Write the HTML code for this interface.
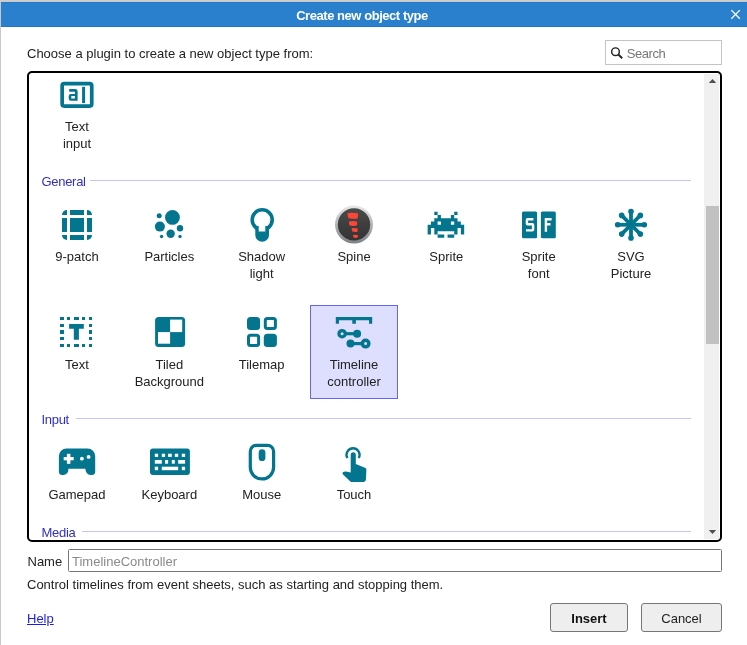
<!DOCTYPE html>
<html><head><meta charset="utf-8"><style>
html,body{margin:0;padding:0}
body{width:747px;height:645px;position:relative;overflow:hidden;background:#fff;font-family:"Liberation Sans", sans-serif}
</style></head><body><div style="position:absolute;left:0;top:0;width:747px;height:645px;will-change:transform">
<div style="position:absolute;left:0;top:0;width:747px;height:2px;background:#cccccc"></div>
<div style="position:absolute;left:0;top:2px;width:1px;height:643px;background:#c8c8c8"></div>
<div style="position:absolute;left:1px;top:2px;width:746px;height:25px;background:#2a80cc;border-top:1px solid #2279c8;border-bottom:1px solid #1f77c9;box-sizing:border-box"></div>
<div style="position:absolute;left:212.00px;top:7.50px;width:300px;text-align:center;line-height:16px;font-size:13px;color:#fff;font-weight:700;white-space:nowrap;letter-spacing:-0.45px;">Create new object type</div>
<svg style="position:absolute;left:0;top:0" width="747" height="645"><path d="M731.3 10.1 L739.8 18.7 M739.8 10.1 L731.3 18.7" stroke="#fff" stroke-width="1.35" fill="none"/></svg>
<div style="position:absolute;left:27.00px;top:45.50px;line-height:16px;font-size:13px;color:#222;font-weight:400;white-space:nowrap;">Choose a plugin to create a new object type from:</div>
<div style="position:absolute;left:605px;top:40px;width:117px;height:25px;border:1px solid #c4c4c4;box-sizing:border-box;background:#fff"></div>
<svg style="position:absolute;left:0;top:0" width="747" height="645"><circle cx="615.5" cy="51.7" r="3.85" stroke="#222" stroke-width="1.45" fill="none"/><path d="M618.3 54.5 L622.2 58.2" stroke="#222" stroke-width="1.9" fill="none"/></svg>
<div style="position:absolute;left:626.80px;top:45.50px;line-height:16px;font-size:13px;color:#777;font-weight:400;white-space:nowrap;letter-spacing:-0.45px;">Search</div>
<div style="position:absolute;left:27px;top:71px;width:695px;height:470.5px;border:2px solid #000;border-radius:5px;box-sizing:border-box;overflow:hidden;background:#fff"></div>
<div style="position:absolute;left:704px;top:74px;width:15px;height:465px;background:#f0f0f0"></div>
<div style="position:absolute;left:706px;top:206px;width:13px;height:138px;background:#c1c1c1"></div>
<svg style="position:absolute;left:0;top:0" width="747" height="645"><path d="M708.8 82.9 L716.2 82.9 L712.5 78.9 Z" fill="#505050"/><path d="M708.8 529.9 L716.2 529.9 L712.5 533.9 Z" fill="#505050"/></svg>
<div style="position:absolute;left:310px;top:305px;width:88px;height:93.5px;background:#dedeff;border:1px solid #6464ff;box-sizing:border-box"></div>
<div style="position:absolute;left:41.50px;top:173.50px;line-height:16px;font-size:13px;color:#3030c8;font-weight:400;white-space:nowrap;letter-spacing:-0.3px;">General</div>
<div style="position:absolute;left:90px;top:180px;width:601px;height:1px;background:#c4c4fb"></div>
<div style="position:absolute;left:41.50px;top:411.60px;line-height:16px;font-size:13px;color:#3030c8;font-weight:400;white-space:nowrap;letter-spacing:-0.3px;">Input</div>
<div style="position:absolute;left:76px;top:418px;width:615px;height:1px;background:#c4c4fb"></div>
<div style="position:absolute;left:41.50px;top:524.50px;line-height:16px;font-size:13px;color:#3030c8;font-weight:400;white-space:nowrap;letter-spacing:-0.3px;">Media</div>
<div style="position:absolute;left:82px;top:530.5px;width:609px;height:1px;background:#c4c4fb"></div>
<div style="position:absolute;left:32.00px;top:118.50px;width:90px;text-align:center;line-height:16px;font-size:13px;color:#222;font-weight:400;white-space:nowrap;">Text</div>
<div style="position:absolute;left:32.00px;top:135.50px;width:90px;text-align:center;line-height:16px;font-size:13px;color:#222;font-weight:400;white-space:nowrap;">input</div>
<div style="position:absolute;left:32.00px;top:248.50px;width:90px;text-align:center;line-height:16px;font-size:13px;color:#222;font-weight:400;white-space:nowrap;">9-patch</div>
<div style="position:absolute;left:124.33px;top:248.50px;width:90px;text-align:center;line-height:16px;font-size:13px;color:#222;font-weight:400;white-space:nowrap;">Particles</div>
<div style="position:absolute;left:216.67px;top:248.50px;width:90px;text-align:center;line-height:16px;font-size:13px;color:#222;font-weight:400;white-space:nowrap;">Shadow</div>
<div style="position:absolute;left:216.67px;top:265.50px;width:90px;text-align:center;line-height:16px;font-size:13px;color:#222;font-weight:400;white-space:nowrap;">light</div>
<div style="position:absolute;left:309.00px;top:248.50px;width:90px;text-align:center;line-height:16px;font-size:13px;color:#222;font-weight:400;white-space:nowrap;">Spine</div>
<div style="position:absolute;left:401.33px;top:248.50px;width:90px;text-align:center;line-height:16px;font-size:13px;color:#222;font-weight:400;white-space:nowrap;">Sprite</div>
<div style="position:absolute;left:493.67px;top:248.50px;width:90px;text-align:center;line-height:16px;font-size:13px;color:#222;font-weight:400;white-space:nowrap;">Sprite</div>
<div style="position:absolute;left:493.67px;top:265.50px;width:90px;text-align:center;line-height:16px;font-size:13px;color:#222;font-weight:400;white-space:nowrap;">font</div>
<div style="position:absolute;left:586.00px;top:248.50px;width:90px;text-align:center;line-height:16px;font-size:13px;color:#222;font-weight:400;white-space:nowrap;">SVG</div>
<div style="position:absolute;left:586.00px;top:265.50px;width:90px;text-align:center;line-height:16px;font-size:13px;color:#222;font-weight:400;white-space:nowrap;">Picture</div>
<div style="position:absolute;left:32.00px;top:356.50px;width:90px;text-align:center;line-height:16px;font-size:13px;color:#222;font-weight:400;white-space:nowrap;">Text</div>
<div style="position:absolute;left:124.33px;top:356.50px;width:90px;text-align:center;line-height:16px;font-size:13px;color:#222;font-weight:400;white-space:nowrap;">Tiled</div>
<div style="position:absolute;left:124.33px;top:373.50px;width:90px;text-align:center;line-height:16px;font-size:13px;color:#222;font-weight:400;white-space:nowrap;">Background</div>
<div style="position:absolute;left:216.67px;top:356.50px;width:90px;text-align:center;line-height:16px;font-size:13px;color:#222;font-weight:400;white-space:nowrap;">Tilemap</div>
<div style="position:absolute;left:309.00px;top:356.50px;width:90px;text-align:center;line-height:16px;font-size:13px;color:#222;font-weight:400;white-space:nowrap;">Timeline</div>
<div style="position:absolute;left:309.00px;top:373.50px;width:90px;text-align:center;line-height:16px;font-size:13px;color:#222;font-weight:400;white-space:nowrap;">controller</div>
<div style="position:absolute;left:32.00px;top:486.50px;width:90px;text-align:center;line-height:16px;font-size:13px;color:#222;font-weight:400;white-space:nowrap;">Gamepad</div>
<div style="position:absolute;left:124.33px;top:486.50px;width:90px;text-align:center;line-height:16px;font-size:13px;color:#222;font-weight:400;white-space:nowrap;">Keyboard</div>
<div style="position:absolute;left:216.67px;top:486.50px;width:90px;text-align:center;line-height:16px;font-size:13px;color:#222;font-weight:400;white-space:nowrap;">Mouse</div>
<div style="position:absolute;left:309.00px;top:486.50px;width:90px;text-align:center;line-height:16px;font-size:13px;color:#222;font-weight:400;white-space:nowrap;">Touch</div>
<svg style="position:absolute;left:0;top:0" width="747" height="645" viewBox="0 0 747 645"><rect x="62.15" y="83.55" width="29.6" height="22.5" rx="2" fill="none" stroke="#03758f" stroke-width="3.7"/><path fill-rule="evenodd" d="M69.2 89 H75.3 Q77.6 89 77.6 91.3 V100.7 H70.9 Q68.7 100.7 68.7 98.5 V96.2 Q68.7 94 70.9 94 H74.9 V91.8 H69.2 Z M71.3 95.9 H74.9 V98.4 H71.3 Z" fill="#03758f"/><rect x="82.1" y="86.8" width="3" height="16.3" fill="#03758f"/><clipPath id="r9"><rect x="62" y="210" width="30" height="30" rx="5"/></clipPath><g clip-path="url(#r9)" fill="#03758f"><rect x="62" y="210" width="5" height="5"/><rect x="62" y="218" width="5" height="14"/><rect x="62" y="235" width="5" height="5"/><rect x="70" y="210" width="14" height="5"/><rect x="70" y="218" width="14" height="14"/><rect x="70" y="235" width="14" height="5"/><rect x="87" y="210" width="5" height="5"/><rect x="87" y="218" width="5" height="14"/><rect x="87" y="235" width="5" height="5"/></g><circle cx="159.2" cy="215.7" r="2.5" fill="#03758f"/><circle cx="172.45" cy="217.4" r="7.4" fill="#03758f"/><circle cx="159.9" cy="226.6" r="5" fill="#03758f"/><circle cx="180" cy="228.3" r="3.2" fill="#03758f"/><circle cx="170.65" cy="233.8" r="4.2" fill="#03758f"/><circle cx="161.6" cy="236.5" r="1.7" fill="#03758f"/><circle cx="180" cy="236.5" r="1.7" fill="#03758f"/><circle cx="262.2" cy="219.8" r="10" fill="none" stroke="#03758f" stroke-width="3.6"/><path d="M255.3 226 H269 V235 A6.85 6.85 0 0 1 255.3 235 Z" fill="#03758f"/><rect x="258.7" y="224" width="6.6" height="7.5" fill="#fff"/><defs><linearGradient id="sg" x1="0" y1="0" x2="0" y2="1"><stop offset="0" stop-color="#e8e8e8"/><stop offset="1" stop-color="#7d8186"/></linearGradient><linearGradient id="sd" x1="0" y1="0" x2="0" y2="1"><stop offset="0" stop-color="#4a4a4a"/><stop offset="1" stop-color="#333"/></linearGradient></defs><circle cx="354" cy="224.6" r="19" fill="url(#sg)"/><circle cx="354" cy="224.4" r="16.2" fill="url(#sd)"/><path d="M347.6 213.1 Q352.9 212.39999999999998 357.9 213.2 Q358.4 215.8 357.59999999999997 218.4 Q352.9 219.20000000000002 348.40000000000003 218.3 Q347.5 215.8 347.6 213.1 Z" fill="#ff4536"/><path d="M348.9 221.4 Q353.1 220.7 357.0 221.5 Q357.5 223.5 356.7 225.5 Q353.1 226.3 349.7 225.4 Q348.79999999999995 223.5 348.9 221.4 Z" fill="#ff4536"/><path d="M351.7 228.3 Q354.79999999999995 227.6 357.59999999999997 228.4 Q358.09999999999997 230.05 357.29999999999995 231.7 Q354.79999999999995 232.5 352.5 231.6 Q351.59999999999997 230.05 351.7 228.3 Z" fill="#ff4536"/><path d="M352.9 235.1 Q355.54999999999995 234.39999999999998 357.9 235.2 Q358.4 236.39999999999998 357.59999999999997 237.6 Q355.54999999999995 238.4 353.7 237.5 Q352.79999999999995 236.39999999999998 352.9 235.1 Z" fill="#ff4536"/><path d="M434.28 211.65h3.32v3.26h-3.32zM454.21 211.65h3.32v3.26h-3.32zM437.60 214.91h3.32v3.26h-3.32zM450.89 214.91h3.32v3.26h-3.32zM434.28 218.18h3.32v3.26h-3.32zM437.60 218.18h3.32v3.26h-3.32zM440.92 218.18h3.32v3.26h-3.32zM444.24 218.18h3.32v3.26h-3.32zM447.57 218.18h3.32v3.26h-3.32zM450.89 218.18h3.32v3.26h-3.32zM454.21 218.18h3.32v3.26h-3.32zM430.95 221.44h3.32v3.26h-3.32zM434.28 221.44h3.32v3.26h-3.32zM440.92 221.44h3.32v3.26h-3.32zM444.24 221.44h3.32v3.26h-3.32zM447.57 221.44h3.32v3.26h-3.32zM454.21 221.44h3.32v3.26h-3.32zM457.53 221.44h3.32v3.26h-3.32zM427.63 224.70h3.32v3.26h-3.32zM430.95 224.70h3.32v3.26h-3.32zM434.28 224.70h3.32v3.26h-3.32zM437.60 224.70h3.32v3.26h-3.32zM440.92 224.70h3.32v3.26h-3.32zM444.24 224.70h3.32v3.26h-3.32zM447.57 224.70h3.32v3.26h-3.32zM450.89 224.70h3.32v3.26h-3.32zM454.21 224.70h3.32v3.26h-3.32zM457.53 224.70h3.32v3.26h-3.32zM460.86 224.70h3.32v3.26h-3.32zM427.63 227.96h3.32v3.26h-3.32zM434.28 227.96h3.32v3.26h-3.32zM437.60 227.96h3.32v3.26h-3.32zM440.92 227.96h3.32v3.26h-3.32zM444.24 227.96h3.32v3.26h-3.32zM447.57 227.96h3.32v3.26h-3.32zM450.89 227.96h3.32v3.26h-3.32zM454.21 227.96h3.32v3.26h-3.32zM460.86 227.96h3.32v3.26h-3.32zM427.63 231.22h3.32v3.26h-3.32zM434.28 231.22h3.32v3.26h-3.32zM454.21 231.22h3.32v3.26h-3.32zM460.86 231.22h3.32v3.26h-3.32zM437.60 234.49h3.32v3.26h-3.32zM440.92 234.49h3.32v3.26h-3.32zM447.57 234.49h3.32v3.26h-3.32zM450.89 234.49h3.32v3.26h-3.32z" fill="#03758f"/><rect x="522" y="211.6" width="15.1" height="26.6" rx="1.5" fill="#03758f"/><rect x="540.9" y="211.6" width="14.9" height="26.6" rx="1.5" fill="#03758f"/><path d="M533.4 219.2 H527.6 Q526.9 219.2 526.9 219.9 V223.6 Q526.9 224.3 527.6 224.3 H532.3 Q533.1 224.3 533.1 225 V229.6 Q533.1 230.4 532.3 230.4 H526" fill="none" stroke="#fff" stroke-width="2.4"/><path d="M551.6 219.2 H545.9 V231.7 M545.9 224.3 H550.5" fill="none" stroke="#fff" stroke-width="2.4"/><line x1="631.0" y1="224.75" x2="644.30" y2="224.75" stroke="#03758f" stroke-width="3.8"/><circle cx="644.30" cy="224.75" r="2.8" fill="#03758f"/><line x1="631.0" y1="224.75" x2="640.33" y2="234.08" stroke="#03758f" stroke-width="3.8"/><circle cx="640.33" cy="234.08" r="2.8" fill="#03758f"/><line x1="631.0" y1="224.75" x2="631.00" y2="238.05" stroke="#03758f" stroke-width="3.8"/><circle cx="631.00" cy="238.05" r="2.8" fill="#03758f"/><line x1="631.0" y1="224.75" x2="621.67" y2="234.08" stroke="#03758f" stroke-width="3.8"/><circle cx="621.67" cy="234.08" r="2.8" fill="#03758f"/><line x1="631.0" y1="224.75" x2="617.70" y2="224.75" stroke="#03758f" stroke-width="3.8"/><circle cx="617.70" cy="224.75" r="2.8" fill="#03758f"/><line x1="631.0" y1="224.75" x2="621.67" y2="215.42" stroke="#03758f" stroke-width="3.8"/><circle cx="621.67" cy="215.42" r="2.8" fill="#03758f"/><line x1="631.0" y1="224.75" x2="631.00" y2="211.45" stroke="#03758f" stroke-width="3.8"/><circle cx="631.00" cy="211.45" r="2.8" fill="#03758f"/><line x1="631.0" y1="224.75" x2="640.33" y2="215.42" stroke="#03758f" stroke-width="3.8"/><circle cx="640.33" cy="215.42" r="2.8" fill="#03758f"/><rect x="60" y="317" width="4" height="3" fill="#03758f"/><rect x="60" y="344" width="4" height="3" fill="#03758f"/><rect x="67" y="317" width="3" height="3" fill="#03758f"/><rect x="67" y="344" width="3" height="3" fill="#03758f"/><rect x="74" y="317" width="5" height="3" fill="#03758f"/><rect x="74" y="344" width="5" height="3" fill="#03758f"/><rect x="82" y="317" width="3" height="3" fill="#03758f"/><rect x="82" y="344" width="3" height="3" fill="#03758f"/><rect x="89" y="317" width="3" height="3" fill="#03758f"/><rect x="89" y="344" width="3" height="3" fill="#03758f"/><rect x="60" y="324" width="4" height="3" fill="#03758f"/><rect x="60" y="330" width="4" height="4" fill="#03758f"/><rect x="60" y="337" width="4" height="3" fill="#03758f"/><rect x="89" y="324" width="3" height="3" fill="#03758f"/><rect x="89" y="330" width="3" height="4" fill="#03758f"/><rect x="89" y="337" width="3" height="3" fill="#03758f"/><path d="M69.1 324 H83.8 V328.7 H78.9 V339.8 H73.8 V328.7 H69.1 Z" fill="#03758f"/><rect x="155.1" y="317.1" width="30" height="29.8" rx="3.5" fill="#03758f"/><rect x="170.1" y="319.6" width="12.1" height="12.5" fill="#fff"/><rect x="158" y="332.1" width="12.1" height="11.6" fill="#fff"/><rect x="247" y="317" width="13.1" height="13.1" rx="3.5" fill="#03758f"/><rect x="263.8" y="333.8" width="13.1" height="13.1" rx="3.5" fill="#03758f"/><rect x="265.3" y="318.5" width="10.1" height="10.1" rx="2" fill="none" stroke="#03758f" stroke-width="3"/><rect x="248.5" y="335.3" width="10.1" height="10.1" rx="2" fill="none" stroke="#03758f" stroke-width="3"/><path d="M335.8 317.1 H372.2 V323.7 H369 V320.3 H355.9 V323.7 H352.3 V320.3 H339 V323.7 H335.8 Z" fill="#03758f"/><rect x="346" y="332.1" width="11" height="3.2" fill="#03758f"/><rect x="350.5" y="342" width="11" height="3.2" fill="#03758f"/><circle cx="342.1" cy="333.7" r="3.15" fill="none" stroke="#03758f" stroke-width="3.3"/><circle cx="357.1" cy="333.7" r="4" fill="#03758f"/><circle cx="350.5" cy="343.6" r="4" fill="#03758f"/><circle cx="365.6" cy="343.6" r="3.25" fill="none" stroke="#03758f" stroke-width="3.5"/><path d="M66.5 448.5 H87.6 A7.6 7.6 0 0 1 95.2 456.1 V471.5 A3.5 3.5 0 0 1 91.7 475 H90.5 A6 6 0 0 1 85.4 468.8 H68.4 A6 6 0 0 1 63.6 475 H62.4 A3.5 3.5 0 0 1 58.9 471.5 V456.1 A7.6 7.6 0 0 1 66.5 448.5 Z" fill="#03758f"/><rect x="63.7" y="457" width="10" height="3.3" fill="#fff"/><rect x="66.9" y="453.8" width="3.5" height="10" fill="#fff"/><circle cx="81.9" cy="458.7" r="1.9" fill="#fff"/><circle cx="88.6" cy="456.9" r="1.9" fill="#fff"/><rect x="150" y="448.6" width="39.9" height="26.5" rx="3" fill="#03758f"/><rect x="154.8" y="453.7" width="3.30" height="3.20" fill="#fff"/><rect x="161.8" y="453.7" width="3.30" height="3.20" fill="#fff"/><rect x="168.1" y="453.7" width="3.70" height="3.20" fill="#fff"/><rect x="174.8" y="453.7" width="3.40" height="3.20" fill="#fff"/><rect x="181.8" y="453.7" width="3.30" height="3.20" fill="#fff"/><rect x="154.8" y="460" width="7.00" height="3.70" fill="#fff"/><rect x="165.1" y="460" width="3.00" height="3.70" fill="#fff"/><rect x="171.8" y="460" width="3.00" height="3.70" fill="#fff"/><rect x="178.2" y="460" width="6.90" height="3.70" fill="#fff"/><rect x="154.8" y="466.7" width="3.30" height="3.50" fill="#fff"/><rect x="161.8" y="466.7" width="16.40" height="3.50" fill="#fff"/><rect x="181.8" y="466.7" width="3.30" height="3.50" fill="#fff"/><path d="M256.3 445.3 H267.6 A6 6 0 0 1 273.6 451.3 V467.3 A11.65 11.65 0 0 1 250.3 467.3 V451.3 A6 6 0 0 1 256.3 445.3 Z" fill="none" stroke="#03758f" stroke-width="3.2"/><rect x="258.7" y="449.3" width="6.7" height="11.8" rx="3.35" fill="#03758f"/><path d="M347.4 458 A6.5 6.5 0 1 1 358.7 458" fill="none" stroke="#03758f" stroke-width="2.4"/><path d="M350.7 454.7 A2.55 2.55 0 0 1 355.8 454.7 V464.1 L365.5 468 Q366.5 468.6 366.4 469.8 L365.9 479.8 Q365.7 481.9 363.6 481.9 H350.9 L342.8 474.3 Q341.9 473.1 343.2 472.1 Q344.6 471.3 346 471.6 L350.7 472.6 Z" fill="#03758f"/></svg>
<div style="position:absolute;left:27.50px;top:553.50px;line-height:16px;font-size:13px;color:#222;font-weight:400;white-space:nowrap;">Name</div>
<div style="position:absolute;left:68px;top:549px;width:654px;height:23px;border:1px solid #767676;border-radius:1.5px;box-sizing:border-box;background:#fff"></div>
<div style="position:absolute;left:72.00px;top:553.50px;line-height:16px;font-size:13px;color:#8a8a8a;font-weight:400;white-space:nowrap;">TimelineController</div>
<div style="position:absolute;left:27.00px;top:576.50px;line-height:16px;font-size:13px;color:#222;font-weight:400;white-space:nowrap;">Control timelines from event sheets, such as starting and stopping them.</div>
<div style="position:absolute;left:27.00px;top:610.50px;line-height:16px;font-size:13px;color:#1c1cf0;font-weight:400;white-space:nowrap;text-decoration:underline;">Help</div>
<div style="position:absolute;left:550px;top:603px;width:78px;height:29px;border:1px solid #767676;border-radius:3px;box-sizing:border-box;background:#eeeeee"></div>
<div style="position:absolute;left:550.00px;top:610.50px;width:78px;text-align:center;line-height:16px;font-size:13px;color:#111;font-weight:700;white-space:nowrap;">Insert</div>
<div style="position:absolute;left:641px;top:603px;width:81px;height:29px;border:1px solid #767676;border-radius:3px;box-sizing:border-box;background:#eeeeee"></div>
<div style="position:absolute;left:641.00px;top:610.50px;width:81px;text-align:center;line-height:16px;font-size:13px;color:#222;font-weight:400;white-space:nowrap;">Cancel</div>
</div></body></html>
